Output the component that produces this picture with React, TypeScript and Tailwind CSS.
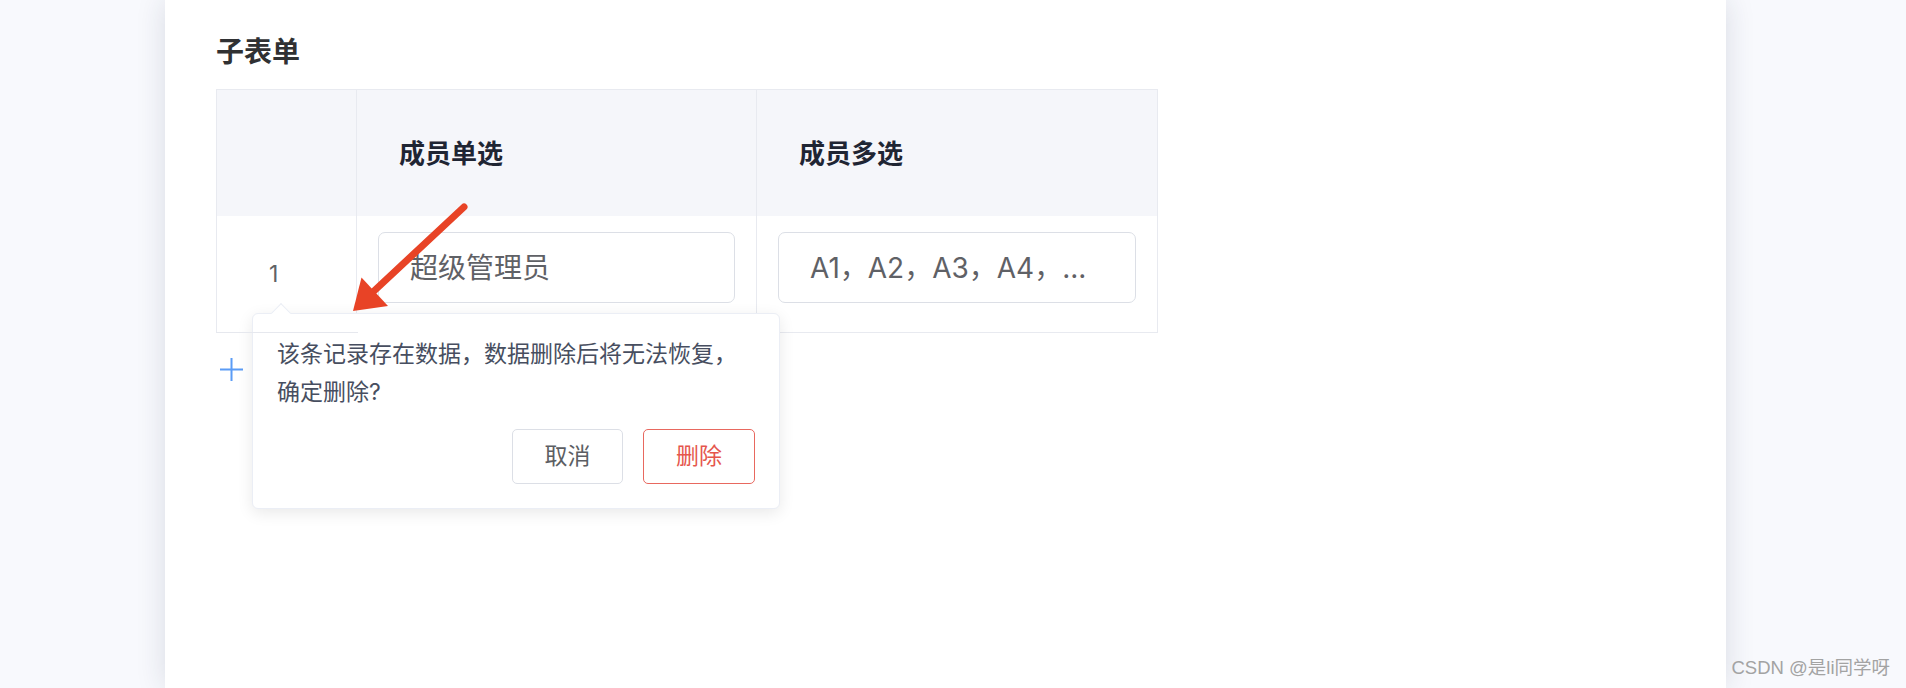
import React from "react";

const FONT = "font-['Inter','Noto_Sans_CJK_SC',sans-serif]";

function HeaderCell({ label, last }: { label?: string; last?: boolean }) {
    return (
        <div
            className={`flex h-[126px] items-center bg-[#f5f6fa] pl-[42px] text-[26px] font-bold text-[#1f2533] ${
                last ? "" : "border-r border-[#e8eaf0]"
            }`}
        >
            {label}
        </div>
    );
}

function InputCell({ value, last }: { value: string; last?: boolean }) {
    return (
        <div className={`h-[116px] px-[21px] pt-[16px] ${last ? "" : "border-r border-[#e8eaf0]"}`}>
            <div className="flex h-[71px] items-center rounded-[7px] border-[1.5px] border-[#dcdfe6] pl-[31px] text-[28px] text-[#5f6166]">
                {value}
            </div>
        </div>
    );
}

export default function App() {
    return (
        <div className={`relative flex h-[688px] w-full overflow-hidden bg-[#f8f9fd] ${FONT}`}>
            <div className="w-[165px] shrink-0" />

            <div className="w-[1561px] shrink-0 bg-white pl-[51px] pt-[32px] shadow-[0_0_28px_rgba(30,40,70,0.14)]">
                <h2 className="text-[28px] leading-[40px] font-semibold text-[#303133]">子表单</h2>

                <div className="relative mt-[17px] w-[942px]">
                    <div className="grid grid-cols-[140px_400px_400px] border border-[#e8eaf0]">
                        <HeaderCell />
                        <HeaderCell label="成员单选" />
                        <HeaderCell label="成员多选" last />

                        <div className="flex h-[116px] items-center border-r border-[#e8eaf0] pl-[52px] text-[23px] text-[#5f6266]">
                            1
                        </div>
                        <InputCell value="超级管理员" />
                        <InputCell value="A1，A2，A3，A4，..." last />
                    </div>

                    {/* popconfirm */}
                    <div className="absolute left-[36px] top-[224px] z-10 w-[528px] rounded-[6px] border border-[#ebeef5] bg-white px-[24px] pt-[21px] pb-[24px] shadow-[0_4px_16px_rgba(0,0,0,0.09)]">
                        <div className="absolute left-[21px] top-[-8px] h-[14px] w-[14px] rotate-45 border-l border-t border-[#ebeef5] bg-white" />
                        <p className="text-[23px] leading-[38px] text-[#474e60]">
                            该条记录存在数据，数据删除后将无法恢复，
                            <br />
                            确定删除?
                        </p>
                        <div className="mt-[18px] flex justify-end gap-[20px]">
                            <button className="flex h-[55px] w-[111px] items-center justify-center rounded-[5px] border-[1.5px] border-[#dcdfe6] bg-white text-[23px] text-[#5c5e63]">
                                取消
                            </button>
                            <button className="flex h-[55px] w-[112px] items-center justify-center rounded-[5px] border-[1.5px] border-[#e8685f] bg-white text-[23px] text-[#e5564c]">
                                删除
                            </button>
                        </div>
                    </div>

                    {/* bottom border of first cell showing over the popover */}
                    <div className="absolute left-0 top-[243px] z-20 h-px w-[142px] bg-[#e6e8ee]" />
                </div>

                <div className="mt-[25px] pl-[4px]">
                    <svg width="23" height="23" viewBox="0 0 23 23">
                        <path d="M11.5 0v23M0 11.5h23" stroke="#5b9cf6" strokeWidth="2" />
                    </svg>
                </div>
            </div>

            {/* red annotation arrow */}
            <svg
                className="pointer-events-none absolute left-0 top-0 z-30"
                width="1906"
                height="688"
                viewBox="0 0 1906 688"
            >
                <line x1="464" y1="207" x2="374" y2="291" stroke="#e84326" strokeWidth="7" strokeLinecap="round" />
                <polygon points="353,311 361.5,277.5 388,306" fill="#e84326" />
            </svg>

            <div className="absolute bottom-[8px] right-[16px] text-[18.5px] leading-[24px] text-[#a3a3a3] font-['Liberation_Sans','Noto_Sans_CJK_SC',sans-serif]">
                CSDN @是li同学呀
            </div>
        </div>
    );
}
